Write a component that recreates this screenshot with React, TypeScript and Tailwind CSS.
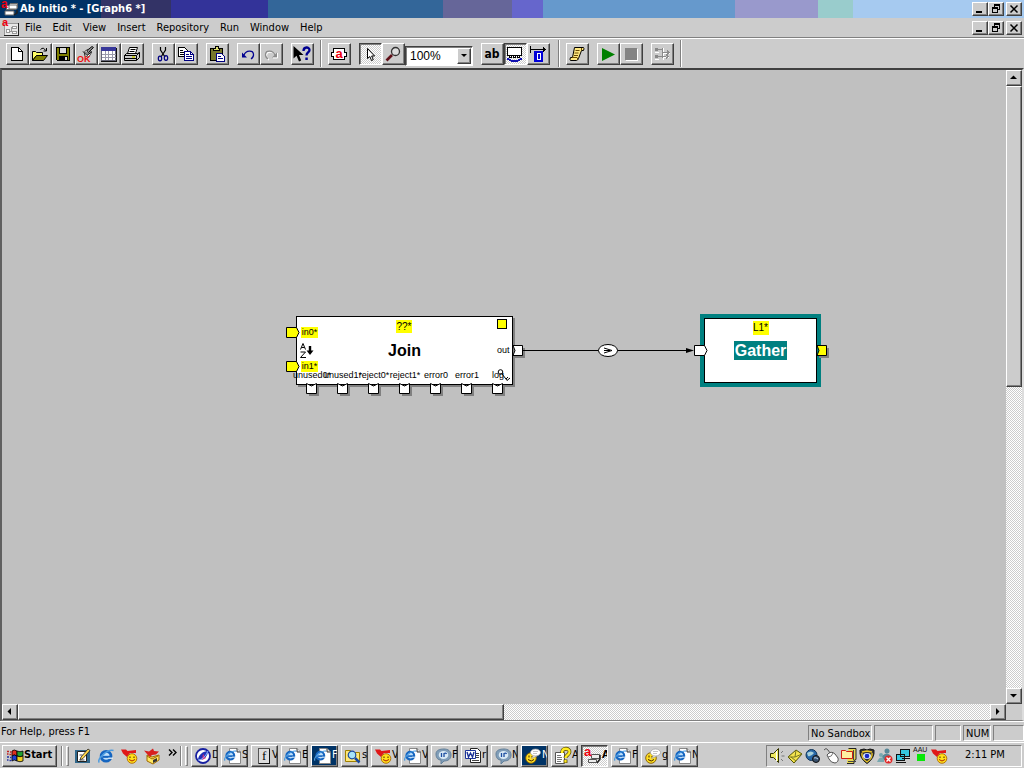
import React from "react";
import { clsx } from "clsx";

const edge =
  "border border-t-white border-l-white border-r-[#404040] border-b-[#404040] shadow-[inset_-1px_-1px_0_#808080]";
const raised = edge + " bg-[#cccccc]";
const pressed =
  "border border-t-[#404040] border-l-[#404040] border-r-white border-b-white shadow-[inset_1px_1px_0_#808080]";
const dither =
  "bg-[conic-gradient(#ffffff_25%,#cccccc_0_50%,#ffffff_0_75%,#cccccc_0)] bg-[length:2px_2px]";
const sunken = "border border-t-[#808080] border-l-[#808080] border-r-white border-b-white";

function Icon({ children, smooth = false }: { children: React.ReactNode; smooth?: boolean }) {
  return (
    <svg
      viewBox="0 0 16 16"
      className="h-4 w-4 shrink-0 overflow-visible"
      fill="none"
      shapeRendering={smooth ? "auto" : "crispEdges"}
      aria-hidden="true"
    >
      {children}
    </svg>
  );
}

/* ---------- shared glyphs ---------- */

const RedA = ({ x = 0, y = 8, size = 11 }: { x?: number; y?: number; size?: number }) => (
  <text x={x} y={y} fontSize={size} fontWeight="bold" fontFamily="Liberation Sans, sans-serif" fill="#ee0010">
    a
  </text>
);

const AppIcon = () => (
  <Icon smooth>
    <path d="M4.500 4.500h8v4h-8zM7.500 3.500l1-1h7v4l-2 2" fill="#fff" stroke="#666" />
    <path d="M7 4h8v4H7zM3 10h9v4H3z" fill="#fff" stroke="#666" />
    <path d="M12 14l3-2V9" stroke="#222" strokeWidth="1.500" />
    <RedA x={-1} y={7} size={12} />
  </Icon>
);

const DocIcon = () => (
  <Icon>
    <path d="M1 3h14v12H1z" fill="#e8e8e8" stroke="#999" />
    <path d="M15.500 3v12.500H1" stroke="#222" />
    <path d="M3.500 9.500h3v3h-3zM9.500 6.500h4v2h-4zM9.500 11.500h4v2h-4z" stroke="#999" fill="#fff" />
    <path d="M7 11h1.500M8.500 7v5" stroke="#999" />
    <RedA x={-1} y={6} />
  </Icon>
);

const IeGlyph = () => (
  <>
    <circle cx="7" cy="8.500" r="4.300" stroke="#1565c0" strokeWidth="2.400" fill="#bfe0fa" />
    <path d="M4 9h8" stroke="#1565c0" strokeWidth="1.800" />
    <path d="M9 10.200h4" stroke="#d8eaf8" strokeWidth="1.200" />
    <path d="M1 14C-1 11 8 2 13.500 3.500" stroke="#4a9be0" strokeWidth="1.300" />
  </>
);

const IePage = () => (
  <Icon smooth>
    <path d="M4.500 .5h7.500l3.500 3.500v11.500h-11z" fill="#fff" stroke="#888" />
    <path d="M12 .5V4h3.500" fill="#ddd" stroke="#333" />
    <g transform="translate(-1 0) scale(.9)">
      <IeGlyph />
    </g>
  </Icon>
);

const Smile = ({ cx = 10, cy = 10, r = 5 }: { cx?: number; cy?: number; r?: number }) => (
  <>
    <circle cx={cx} cy={cy} r={r} fill="#ffe01a" stroke="#b06a00" strokeWidth=".9" />
    <path d={`M${cx - 2} ${cy - 2}v1.500M${cx + 2} ${cy - 2}v1.500`} stroke="#402000" />
    <path d={`M${cx - 3} ${cy + 1}q3 3 6 0`} stroke="#b02000" />
  </>
);

const Messenger = () => (
  <Icon smooth>
    <path d="M0 1.500h5l1.500 1.500L15 2v3H9L6 9 2 5.500z" fill="#e01818" />
    <Smile cx={11} cy={10.5} r={4.8} />
  </Icon>
);

const ChatSmile = () => (
  <Icon smooth>
    <circle cx="6" cy="10" r="5.300" fill="#ffdf20" stroke="#805800" strokeWidth=".9" />
    <path d="M4 7.500v2M7 8v1.500M3 11.500q3.500 3 6 0" stroke="#402000" />
    <path d="M9 7l-2.500 3.500L12 8z" fill="#fff" stroke="#999" strokeWidth=".7" />
    <ellipse cx="10.500" cy="4.500" rx="5" ry="3.500" fill="#fff" stroke="#999" strokeWidth=".7" />
    <path d="M8 3.500h5M8 5.500h4" stroke="#aaa" strokeWidth=".7" />
  </Icon>
);

const IrcIcon = () => (
  <Icon smooth>
    <path d="M1 6C1 2 5 1 9 1s7 2 7 6-3 6-7 6l-3 3V12C3 12 1 10 1 6z" fill="#7f9db8" stroke="#64809a" />
    <ellipse cx="8.500" cy="7" rx="4.800" ry="4" fill="#d9eaf5" />
    <path d="M6.500 5v4M9 9V5.500q2-1 2.500.5" stroke="#1c4ea0" strokeWidth="1.300" />
  </Icon>
);

/* ---------- toolbar ---------- */

const NewIcon = () => (
  <Icon>
    <path d="M2.500 1.500h7l4 4v9h-11z" fill="#fff" stroke="#000" />
    <path d="M9.500 1.500v4h4" stroke="#000" />
  </Icon>
);
const OpenIcon = () => (
  <Icon smooth>
    <path d="M.5 5.500h3l1 1h6v3h-6l-4 5z" fill="#ffff66" stroke="#000" />
    <path d="M4.500 9.500h11l-4 5H.5z" fill="#808000" stroke="#000" />
    <path d="M8.500 3.500q3-3 5 1M14.500 2v3h-3" stroke="#000" />
  </Icon>
);
const SaveIcon = () => (
  <Icon>
    <path d="M1.500 1.500h13v13h-12l-1-1z" fill="#808000" stroke="#000" />
    <path d="M4.500 1.500h7v6h-7z" fill="#ddd" stroke="#000" />
    <path d="M4 10h9v5H4z" fill="#000" />
    <path d="M10 11h2v3h-2z" fill="#ddd" />
  </Icon>
);
const CheckIcon = () => (
  <Icon smooth>
    <path d="M6.500 5.500l3-2 4 3-3 5-4-2z" fill="#fff" stroke="#444" />
    <path d="M9 4.500l5-4 1.500 1-5 5zM5 5.500l4 4 5-4" fill="#888" stroke="#111" />
    <text x="-1" y="16" fontSize="9" fontWeight="bold" fontFamily="Liberation Sans, sans-serif" fill="#ee1010">
      OK
    </text>
  </Icon>
);
const TableIcon = () => (
  <Icon>
    <path d="M.5 1.500h14v13H.5z" fill="#fff" stroke="#667" />
    <path d="M0 1h15v4H0z" fill="#38389a" />
    <path d="M1 8.500h14M1 11.500h14M4.500 5v9M7.500 5v9M11.500 5v9" stroke="#99a" />
    <path d="M0 15.500h15.500V2" stroke="#111" />
  </Icon>
);
const PrintIcon = () => (
  <Icon smooth>
    <path d="M5.500 1.500h8l-2 6h-8z" fill="#fff" stroke="#000" />
    <path d="M6.500 3.500h5M5.500 5.500h5" stroke="#000" />
    <path d="M.5 9.500l2-2h11l2-1v5l-3 3H.5z" fill="#ccc" stroke="#000" />
    <path d="M.5 9.500h12v5M12.500 9.500l3-3M.5 12.500h12" stroke="#000" />
    <path d="M8 11h3" stroke="#c8c800" strokeWidth="1.500" />
  </Icon>
);
const CutIcon = () => (
  <Icon smooth>
    <path d="M5.500 1v3l4.500 7M10.500 1v3L6 11" stroke="#000" strokeWidth="1.200" />
    <ellipse cx="5" cy="12.500" rx="1.700" ry="2.300" stroke="#000080" strokeWidth="1.200" />
    <ellipse cx="11" cy="12" rx="1.700" ry="2.300" stroke="#000080" strokeWidth="1.200" />
  </Icon>
);
const CopyIcon = () => (
  <Icon>
    <path d="M.5 1.500h6l3 3v6h-9z" fill="#fff" stroke="#000" />
    <path d="M2 4.500h3M2 6.500h5M2 8.500h5" stroke="#000" />
    <path d="M6.500 5.500h6l3 3v6h-9z" fill="#fff" stroke="#000080" />
    <path d="M12.500 5.500v3h3M8 8.500h3M8 10.500h6M8 12.500h6" stroke="#000080" />
  </Icon>
);
const PasteIcon = () => (
  <Icon>
    <path d="M1.500 2.500h12v12h-12z" fill="#77772b" stroke="#000" />
    <path d="M4.500 4.500h6v-2h-1.500v-2h-3v2H4.500z" fill="#dddd70" stroke="#000" />
    <path d="M7.500 7.500h5l3 3v5h-8z" fill="#fff" stroke="#000080" />
    <path d="M9 10.500h3M9 12.500h5" stroke="#000080" />
  </Icon>
);
const UndoIcon = () => (
  <Icon smooth>
    <path d="M4 9C6 4 13 4 13.500 8c.5 3-1 4-2.500 5" stroke="#000090" strokeWidth="1.200" />
    <path d="M2 6.500v5h5z" fill="#000090" />
  </Icon>
);
const RedoIcon = () => (
  <Icon smooth>
    <path d="M13 10C11 5 4 5 3.500 9c-.5 3 1 4 2.500 5" stroke="#fff" strokeWidth="1.200" />
    <path d="M12 9C10 4 3 4 2.500 8c-.5 3 1 4 2.500 5" stroke="#8b8b8b" strokeWidth="1.200" />
    <path d="M14 6.500v5H9z" fill="#8b8b8b" />
    <path d="M14.500 7v5H10" stroke="#fff" />
  </Icon>
);
const HelpIcon = () => (
  <Icon smooth>
    <path d="M-.5 0v12.500l3-2.700L5 15.500l2.200-1L5 9h4.500z" fill="#000" />
    <path d="M9.500 5c0-4.500 6-4.500 6-1 0 2.500-3 2.500-3 5.500" stroke="#000090" strokeWidth="2.300" />
    <path d="M11.300 11.500h2.500v2.500h-2.500z" fill="#000090" />
  </Icon>
);
const ComponentIcon = () => (
  <Icon>
    <path d="M0 8.500h16" stroke="#000" strokeWidth="5" />
    <path d="M2.500 2.500h11v11h-11z" fill="#fff" stroke="#000" />
    <path d="M1 7h2v3H1zM13 7h2v3h-2z" fill="#fff" />
    <RedA x={4.5} y={12} size={13} />
  </Icon>
);
const PointerIcon = () => (
  <Icon smooth>
    <path d="M5.500 2.500v10l2.300-2 1.700 4 1.800-.8-1.700-3.700h3z" fill="#fff" stroke="#000" />
  </Icon>
);
const ZoomIcon = () => (
  <Icon smooth>
    <circle cx="10.500" cy="5.500" r="4" fill="#ddd" stroke="#333" strokeWidth="1.300" />
    <path d="M7 9l-5.500 5.500" stroke="#601018" strokeWidth="2.600" />
  </Icon>
);
const LayoutIcon = () => (
  <Icon>
    <path d="M.5 1.500h14v8H.5z" fill="#fff" stroke="#000" />
    <path d="M2.500 9.500h2v2h-2zM6.500 9.500h2v2h-2zM10.500 9.500h2v2h-2z" fill="#fff" stroke="#000" />
    <path d="M0 12h2v1h2v1h7v-1h2v-1h2v2h-2v1h-2v1H4v-1H2v-1H0z" fill="#1010b0" />
  </Icon>
);
const DepthIcon = () => (
  <Icon>
    <path d="M.5 0v7M0 3.500h15M13 1.500l2 2-2 2" stroke="#000" />
    <path d="M4 5h9v11H4z" fill="#0000d8" />
    <path d="M7.500 7.500h3v6h-3z" stroke="#fff" />
  </Icon>
);
const ScrollIcon = () => (
  <Icon smooth>
    <path d="M5.500 1.500h9q1 1 0 3h-2l-3 8q-1 2-2 2h-6q-1-1 0-3h2z" fill="#ffe880" stroke="#000" />
    <path d="M6.500 4.500h4M5.500 7h4M5 9.500h4M12.500 2v2.500M3 11.500h5l1 2" stroke="#6b4a00" />
  </Icon>
);
const PlayIcon = () => (
  <Icon smooth>
    <path d="M2 2l13 6.500L2 15z" fill="#008000" />
  </Icon>
);
const StopIcon = () => (
  <Icon>
    <path d="M3 3h12v12H3z" fill="#fff" />
    <path d="M2 2h12v12H2z" fill="#848484" />
  </Icon>
);
const FlowIcon = () => (
  <Icon>
    <path d="M1 6.500h4M1 13.500h4M9.500 2v12M10 7.500h6M10 11.500h5" stroke="#fff" />
    <path d="M1 2h3v3H1zM1 9h3v3H1z" fill="#888" />
    <path d="M4 3.500h4M4 10.500h4M8.500 2v10M9 6.500h6M9 10.500h3M13 4.500l2 2-2 2M12 8.500l2 2-2 2" stroke="#8b8b8b" />
  </Icon>
);

function ToolButton({
  label,
  down,
  disabled,
  children,
}: {
  label: string;
  down?: boolean;
  disabled?: boolean;
  children: React.ReactNode;
}) {
  return (
    <button
      type="button"
      aria-label={label}
      aria-pressed={down}
      disabled={disabled}
      className={clsx(
        "flex h-[22px] w-[23px] shrink-0 items-center pl-0.5",
        down ? pressed : raised,
        down && dither,
      )}
    >
      {children}
    </button>
  );
}

const ToolSeparator = () => <div className="h-[27px] w-0.5 shrink-0 border-l border-[#808080] bg-white" />;

function Toolbar() {
  return (
    <div role="toolbar" aria-label="Standard" className="flex h-[30px] items-center gap-2 border-t border-white pl-1.5">
      <div className="flex">
        <ToolButton label="New"><NewIcon /></ToolButton>
        <ToolButton label="Open"><OpenIcon /></ToolButton>
        <ToolButton label="Save"><SaveIcon /></ToolButton>
        <ToolButton label="Check"><CheckIcon /></ToolButton>
        <ToolButton label="Table"><TableIcon /></ToolButton>
        <ToolButton label="Print"><PrintIcon /></ToolButton>
      </div>
      <div className="flex">
        <ToolButton label="Cut"><CutIcon /></ToolButton>
        <ToolButton label="Copy"><CopyIcon /></ToolButton>
      </div>
      <ToolButton label="Paste"><PasteIcon /></ToolButton>
      <div className="flex">
        <ToolButton label="Undo"><UndoIcon /></ToolButton>
        <ToolButton label="Redo" disabled><RedoIcon /></ToolButton>
      </div>
      <div className="flex items-center gap-1.5">
        <ToolButton label="Context help"><HelpIcon /></ToolButton>
        <ToolSeparator />
        <ToolButton label="Component"><ComponentIcon /></ToolButton>
      </div>
      <div className="flex items-center">
        <ToolButton label="Select" down><PointerIcon /></ToolButton>
        <ToolButton label="Zoom"><ZoomIcon /></ToolButton>
        <div className={clsx("relative mt-1 flex h-5 w-[68px] bg-white", pressed)}>
          <select
            aria-label="Zoom level"
            className="w-full appearance-none bg-transparent pl-1 text-[12px] leading-[18px] font-['Liberation_Sans',sans-serif] text-black"
          >
            <option>100%</option>
          </select>
          <span
            className={clsx("pointer-events-none absolute top-px right-px flex h-4 w-3.5 items-center justify-center", raised)}
          >
            <span className="border-x-3 border-t-3 border-x-transparent border-t-black" />
          </span>
        </div>
      </div>
      <div className="flex">
        <ToolButton label="Labels">
          <span className="w-4 text-center font-['DejaVu_Sans_Condensed','DejaVu_Sans',sans-serif] text-[12px] font-bold">
            ab
          </span>
        </ToolButton>
        <ToolButton label="Ports" down><LayoutIcon /></ToolButton>
        <ToolButton label="Depth"><DepthIcon /></ToolButton>
      </div>
      <div className="flex items-center gap-1.5">
        <ToolSeparator />
        <ToolButton label="Script"><ScrollIcon /></ToolButton>
      </div>
      <div className="flex">
        <ToolButton label="Run"><PlayIcon /></ToolButton>
        <ToolButton label="Stop" disabled><StopIcon /></ToolButton>
      </div>
      <div className="flex items-center gap-1.5">
        <ToolButton label="Flow" disabled><FlowIcon /></ToolButton>
        <ToolSeparator />
      </div>
    </div>
  );
}

/* ---------- title and menu ---------- */

function WindowButtons() {
  const base = clsx("flex h-3.5 w-4 items-center justify-center", raised);
  return (
    <div className="flex gap-0.5 pr-0.5">
      <div className="flex">
        <button type="button" aria-label="Minimize" className={base}>
          <svg viewBox="0 0 10 10" className="h-2.5 w-2.5" shapeRendering="crispEdges">
            <path d="M1 7h6v2H1z" />
          </svg>
        </button>
        <button type="button" aria-label="Restore" className={base}>
          <svg viewBox="0 0 10 10" className="h-2.5 w-2.5" shapeRendering="crispEdges" fill="none" stroke="#000">
            <path d="M3.500 3V.5h5v5H7M3 1.500h6M1.500 3.500h5v5h-5zM1 4.500h6" />
          </svg>
        </button>
      </div>
      <button type="button" aria-label="Close" className={base}>
        <svg viewBox="0 0 10 10" className="h-2.5 w-2.5" fill="none" stroke="#000" strokeWidth="1.500">
          <path d="M1.500 1.500l7 7M8.500 1.500l-7 7" />
        </svg>
      </button>
    </div>
  );
}

function TitleBar() {
  return (
    <header className="flex h-[18px] items-center justify-between bg-[linear-gradient(to_right,#003366_0_9.9%,#333366_0_16.7%,#333399_0_26.2%,#336699_0_43.3%,#666699_0_50%,#6666cc_0_53%,#6699cc_0_71.8%,#9999cc_0_79.9%,#99cccc_0_83.3%,#a6caf0_0)] pl-0.5">
      <h1 className="flex items-center gap-0.5 text-[11px] font-bold whitespace-nowrap text-white">
        <AppIcon />
        Ab Initio * - [Graph6 *]
      </h1>
      <WindowButtons />
    </header>
  );
}

const menus = ["File", "Edit", "View", "Insert", "Repository", "Run", "Window", "Help"];

function MenuBar() {
  return (
    <div className="flex h-5 items-center justify-between border-b border-[#808080] pt-px pl-[3px]">
      <nav aria-label="Menu" className="flex items-center">
        <DocIcon />
        {menus.map((m) => (
          <button key={m} type="button" className="pr-[5px] pl-1.5 text-[11px] leading-4">
            {m}
          </button>
        ))}
      </nav>
      <WindowButtons />
    </div>
  );
}

/* ---------- diagram ---------- */

const tag = "absolute bg-[#ffff00] text-center";

function SidePort({ className, fill }: { className: string; fill: string }) {
  return (
    <svg viewBox="0 0 14 12" className={clsx("absolute h-3 w-3.5", className)} aria-hidden="true">
      <path d="M.5.500h10l2.500 5-2.500 5h-10z" fill={fill} stroke="#000" />
    </svg>
  );
}

function OutPort({ className, fill }: { className: string; fill: string }) {
  return (
    <svg viewBox="0 0 13 14" className={clsx("absolute h-3.5 w-[13px]", className)} aria-hidden="true">
      <path d="M2 3h10v10H2z" fill="#808080" />
      <path d="M0 .5h9.500v10H0l2-5z" fill={fill} stroke="#000" />
    </svg>
  );
}

const bottomPorts = [
  { name: "unused0*", box: "left-[-8px]" },
  { name: "unused1*", box: "left-[23px]" },
  { name: "reject0*", box: "left-[54px]" },
  { name: "reject1*", box: "left-[85px]" },
  { name: "error0", box: "left-[116px]" },
  { name: "error1", box: "left-[147px]" },
  { name: "log", box: "left-[178px]" },
];

function JoinNode() {
  return (
    <section
      aria-label="Join"
      className="absolute top-[246px] left-[294px] h-[69px] w-[217px] border border-black bg-white text-[9px] leading-[11px] shadow-[2px_2px_0_#808080]"
    >
      <SidePort className="top-[10px] left-[-11px]" fill="#ffff00" />
      <span className={clsx(tag, "top-[10px] left-1 w-[17px]")}>in0*</span>
      <svg viewBox="0 0 14 16" className="absolute top-[26px] left-[3px] h-4 w-3.5" fill="none" stroke="#000" aria-hidden="true">
        <path d="M.5 6.500l2.500-6 2.500 6M1.500 4.500h3M.5 9h5l-5 5.500h5.500" />
        <path d="M10 3v5" strokeWidth="2.400" />
        <path d="M6.500 7.500h7L10 12z" fill="#000" stroke="none" />
      </svg>
      <SidePort className="top-[44px] left-[-11px]" fill="#ffff00" />
      <span className={clsx(tag, "top-[44px] left-1 w-[17px]")}>in1*</span>
      <span className={clsx(tag, "top-[3px] left-[99px] w-4 text-[10px] leading-[13px]")}>??*</span>
      <span className="absolute top-[2px] left-[200px] h-2.5 w-2.5 border border-black bg-[#ffff00]" />
      <h2 className="pt-[25px] text-center text-[16px] leading-[18px] font-bold">Join</h2>
      <span className="absolute top-[28px] left-[200px]">out</span>
      <OutPort className="top-[28px] left-[216px]" fill="#fff" />
      {bottomPorts.map((p) => (
        <div key={p.name} className={clsx("absolute top-[53px] flex w-[46px] flex-col items-center", p.box)}>
          <span>{p.name}</span>
          <svg viewBox="0 0 14 15" className="mt-px ml-0.5 h-[15px] w-3.5 shrink-0" aria-hidden="true">
            <path d="M3 5h10v9H3z" fill="#808080" />
            <path d="M.5 1.500l5 2.500 5-2.500v10H.5z" fill="#fff" stroke="#000" />
          </svg>
        </div>
      ))}
      <svg viewBox="0 0 14 14" className="absolute top-[52px] left-[200px] h-3.5 w-3.5" fill="none" stroke="#000" aria-hidden="true">
        <circle cx="3.500" cy="3" r="2.300" />
        <path d="M5 5l4 5 2-2M9 10l1 1.500 3-2.500" />
      </svg>
    </section>
  );
}

function GatherNode() {
  return (
    <section
      aria-label="Gather"
      className="absolute top-[244px] left-[698px] h-[73px] w-[121px] border-4 border-[#008080] bg-white text-[10px] leading-[14px]"
    >
      <div className="flex h-full flex-col items-center border border-black pt-0.5">
        <span className="w-4 bg-[#ffff00] text-center">L1*</span>
        <h2 className="mt-1.5 bg-[#008080] px-px text-[16px] leading-[19px] font-bold text-white">Gather</h2>
      </div>
      <SidePort className="top-[27px] left-[-10px]" fill="#fff" />
      <OutPort className="top-[27px] left-[113px]" fill="#ffff00" />
    </section>
  );
}

function Diagram() {
  return (
    <main className="relative min-h-0 min-w-0 flex-1 overflow-hidden bg-[#c0c0c0] font-['Liberation_Sans',Arial,sans-serif]">
      <JoinNode />
      <GatherNode />
      <svg viewBox="0 0 176 14" className="absolute top-[274px] left-[520px] h-3.5 w-44" aria-hidden="true">
        <path d="M0 6.500h170" stroke="#000" />
        <path d="M164 4l8 2.500-8 2.500z" />
        <ellipse cx="86" cy="6.500" rx="9.500" ry="6" fill="#fff" stroke="#000" />
        <path d="M82 4l8 2.500-8 2.500M82 6.500h6" fill="none" stroke="#000" />
      </svg>
    </main>
  );
}

const arrows: Record<string, string> = {
  up: "M4 9h7L7.500 5.500z",
  down: "M4 6h7l-3.500 3.500z",
  left: "M9 4v7L5.500 7.500z",
  right: "M6 4v7l3.500-3.500z",
};

function ScrollArrow({ dir }: { dir: string }) {
  return (
    <button
      type="button"
      aria-label={"Scroll " + dir}
      className={clsx("flex h-4 w-4 shrink-0 items-center justify-center", raised)}
    >
      <svg viewBox="0 0 16 16" className="h-4 w-4 shrink-0">
        <path d={arrows[dir]} />
      </svg>
    </button>
  );
}

function Workspace() {
  return (
    <div className="flex min-h-0 flex-1 border-2 border-t-[#404040] border-r-[#dddddd] border-b border-b-[#808080] border-l-[#606060]">
      <div className="flex min-w-0 flex-1 flex-col">
        <Diagram />
        <div className={clsx("flex h-4", dither)}>
          <ScrollArrow dir="left" />
          <div className="flex-1">
            <div className={clsx("h-4 w-1/2", raised)} />
          </div>
          <ScrollArrow dir="right" />
        </div>
      </div>
      <div className={clsx("flex w-4 flex-col", dither)}>
        <ScrollArrow dir="up" />
        <div className="flex-1">
          <div className={clsx("h-1/2 w-4", raised)} />
        </div>
        <ScrollArrow dir="down" />
        <div className="h-4 bg-[#cccccc]" />
      </div>
    </div>
  );
}

function StatusBar() {
  const cell = clsx("h-4 pl-0.5 leading-[15px]", sunken);
  return (
    <div className="flex h-[21px] items-center justify-between border-t border-white pt-px pl-px text-[11px]">
      <p>For Help, press F1</p>
      <div className="flex gap-0.5 whitespace-nowrap">
        <span className={clsx(cell, "w-16")}>No Sandbox</span>
        <span className={clsx(cell, "w-[59px]")} />
        <span className={clsx(cell, "w-[26px]")} />
        <span className={clsx(cell, "w-7")}>NUM</span>
        <span className={clsx(cell, "w-[31px]")} />
      </div>
    </div>
  );
}

/* ---------- taskbar ---------- */

const WindowsFlag = () => (
  <Icon smooth>
    <path d="M5 3q2-2 5 0v5q-3-2-5 0z" fill="#e03020" stroke="#000" strokeWidth=".8" />
    <path d="M10 3q3 1.500 6 0v5q-3 1.500-6 0z" fill="#20a030" stroke="#000" strokeWidth=".8" />
    <path d="M5 8q2-2 5 0v5q-3-2-5 0z" fill="#2040d0" stroke="#000" strokeWidth=".8" />
    <path d="M10 8q3 1.500 6 0v5q-3 1.500-6 0z" fill="#f0d020" stroke="#000" strokeWidth=".8" />
    <path d="M0 3.500h2M3 4h1.500M0 6h1.500M2.500 6.500h2" stroke="#c02020" strokeWidth="1.500" />
    <path d="M0 9h2M3 9.500h1.500M0 12h1.500M2.500 12.500h2" stroke="#2030a0" strokeWidth="1.500" />
  </Icon>
);
const DesktopIcon = () => (
  <Icon smooth>
    <path d="M0 2h15v13H0z" fill="#30688c" />
    <path d="M2.500 3.500h9v10h-9z" fill="#fff" stroke="#222" />
    <path d="M5 12l1-3 7-8 2 1.500-7 8z" fill="#ffd848" stroke="#222" strokeWidth=".8" />
    <path d="M4.500 7h3M4.500 12h5" stroke="#555" />
  </Icon>
);
const IeIcon = () => (
  <Icon smooth>
    <g transform="translate(0 -1.500) scale(1.150)">
      <IeGlyph />
    </g>
  </Icon>
);
const OutlookIcon = () => (
  <Icon smooth>
    <path d="M3 7l5 2 7-2v5l-6 4-6-3z" fill="#ffe860" stroke="#a06800" />
    <path d="M0 2.500l5 1 4-3 1 2.500 5 .5-3 3-4 .500L6 9 3 6z" fill="#d82020" />
    <path d="M3 8l5 3 6-3" stroke="#a06800" />
    <path d="M9 12l4-2v3l-4 2z" fill="#333" />
  </Icon>
);
const GlobeSwoosh = () => (
  <Icon smooth>
    <circle cx="8" cy="8" r="7" fill="#fff" stroke="#1820a0" strokeWidth="1.800" />
    <path d="M3 12C3 7 8 3 13 3c0 5-4 9-10 9z" fill="#2030b8" />
    <path d="M7 12l1-6 3 4z" fill="#d03080" />
    <path d="M3 12q6 0 10-9" stroke="#80b0ff" />
  </Icon>
);
const FIcon = () => (
  <Icon>
    <path d="M3.500.5h11v15h-11z" fill="#ddd" stroke="#555" />
    <path d="M14.500 1v14.500H4" stroke="#111" />
    <text x="7" y="12" fontSize="13" fontFamily="Liberation Serif, serif" fill="#000">
      f
    </text>
  </Icon>
);
const SearchFolder = () => (
  <Icon smooth>
    <path d="M.5 2.500h5l1 2h8v9H.5z" fill="#ffe878" stroke="#a08000" />
    <circle cx="7" cy="7" r="3.800" fill="#a8e4f8" stroke="#1848a0" strokeWidth="1.200" />
    <path d="M10 10l4.500 4.500" stroke="#1848a0" strokeWidth="2.500" />
  </Icon>
);
const WordIcon = () => (
  <Icon smooth>
    <path d="M5.500 .5h7l3 3v11h-10z" fill="#fff" stroke="#222" />
    <path d="M11 5.500h3M11 7.500h3M11 9.500h3M7 12.500h7" stroke="#444" />
    <path d="M.5 2.500h10v8H.5z" fill="#fff" stroke="#1c3498" />
    <path d="M2 4l1.500 5L5.500 5l2 4L9 4" stroke="#1c3498" strokeWidth="1.400" />
  </Icon>
);
const HelpPage = () => (
  <Icon smooth>
    <path d="M.5 4.500h9v11h-9z" fill="#fff" stroke="#555" />
    <path d="M2 7.500h4M2 9.500h5M2 11.500h5M2 13.500h4" stroke="#777" />
    <path d="M7 5c0-6 8-5 7.500-1 0 3-4 3-4 6" stroke="#554400" strokeWidth="3.800" />
    <path d="M10.500 11.500v3.500" stroke="#554400" strokeWidth="3.800" />
    <path d="M7 5c0-6 8-5 7.500-1 0 3-4 3-4 6M10.500 12v2.500" stroke="#ffec20" strokeWidth="2.300" />
  </Icon>
);
const AbTask = () => (
  <Icon smooth>
    <path d="M6.500 6.500h8v4h-8zM3.500 11.500h8v3h-8z" fill="#eee" stroke="#555" />
    <path d="M12 15l3-4V7" stroke="#222" strokeWidth="1.500" />
    <RedA x={-1} y={8} size={13} />
  </Icon>
);

const tasks: { icon: React.ReactNode; text: string; flash?: boolean; active?: boolean }[] = [
  { icon: <GlobeSwoosh />, text: "D" },
  { icon: <IePage />, text: "S" },
  { icon: <FIcon />, text: "V" },
  { icon: <IePage />, text: "E" },
  { icon: <IePage />, text: "F", flash: true },
  { icon: <SearchFolder />, text: "s" },
  { icon: <Messenger />, text: "V" },
  { icon: <IePage />, text: "V" },
  { icon: <IrcIcon />, text: "F" },
  { icon: <WordIcon />, text: "r" },
  { icon: <IrcIcon />, text: "N" },
  { icon: <ChatSmile />, text: "N", flash: true },
  { icon: <HelpPage />, text: "A" },
  { icon: <AbTask />, text: "A", active: true },
  { icon: <IePage />, text: "F" },
  { icon: <ChatSmile />, text: "g" },
  { icon: <IePage />, text: "N" },
];

const trayIcons: React.ReactNode[] = [
  <Icon smooth>
    <path d="M1.500 5.500h3l5-5v14l-5-5h-3z" fill="#f0ec60" stroke="#333300" />
    <path d="M7.500 3v10" stroke="#fff" />
    <path d="M12 5l2-2M12.500 8h3M12 11l2 2" stroke="#777" />
  </Icon>,
  <Icon smooth>
    <path d="M1 9l8-7 6 4-8 9z" fill="#f5e44c" stroke="#555500" />
    <path d="M9 2l-1 7-7 0M8 9l7-3M4 9l5 4" stroke="#777722" />
  </Icon>,
  <Icon smooth>
    <circle cx="6.500" cy="7" r="5.500" fill="#2868a8" stroke="#103458" />
    <path d="M2 5q4-3 7 0-3 4-6 3" fill="#a8d0d8" />
    <circle cx="11" cy="11" r="3.500" fill="#38506c" stroke="#111" />
    <path d="M9 10q2-1 4 1" stroke="#b8d8f8" />
  </Icon>,
  <Icon smooth>
    <path d="M1 2q2-3 4 0l2 3" stroke="#555" />
    <path d="M4 7q4-5 8-1l3 4q1 4-3 5-4 0-6-4z" fill="#fff" stroke="#555" />
    <path d="M5 9q4 0 5-4" stroke="#777" />
  </Icon>,
  <Icon smooth>
    <path d="M7.500 .5h7.500v11l-2 1v3H6" fill="#e8d850" stroke="#222" />
    <path d="M.5 2.500h4l1 1h6v7H.5z" fill="#fff0a0" stroke="#d02010" />
    <path d="M12.500 2v10M7 13.500h8" stroke="#444" />
  </Icon>,
  <Icon smooth>
    <path d="M1 2l4-1 3 1 3-1 4 1q1 8-7 13.500Q0 10 1 2z" fill="#333" stroke="#111" />
    <path d="M3 4l5-1 5 1M3 5q-1 5 5 9 6-4 5-9" stroke="#e8c428" strokeWidth="1.400" />
    <ellipse cx="8" cy="8" rx="4" ry="3" fill="#d8e8ff" />
    <circle cx="8" cy="8" r="2.300" fill="#1828c8" />
  </Icon>,
  <Icon smooth>
    <circle cx="10" cy="3" r="2.500" fill="#588898" />
    <path d="M5 8q5-5 9 0v4H6z" fill="#588898" />
    <circle cx="4" cy="7" r="2" fill="#78a8b0" />
    <path d="M0 14q3-7 7-3v3z" fill="#78a8b0" />
    <circle cx="11.500" cy="11.500" r="4" fill="#e02828" />
    <path d="M9.500 9.500l4 4M13.500 9.500l-4 4" stroke="#fff" strokeWidth="1.400" />
  </Icon>,
  <Icon>
    <path d="M5.500 1.500h9v7h-9zM1.500 6.500h8v6h-8z" fill="#35c8e0" stroke="#111" />
    <path d="M1 14h10v1H1zM7 10h8v1H7z" fill="#111" />
  </Icon>,
  <Icon>
    <text x="0" y="4" fontSize="7" fontFamily="Liberation Sans, sans-serif" fill="#111">
      AAU
    </text>
    <path d="M4 6h8v7H4z" fill="#08e808" />
  </Icon>,
  <Messenger />,
];

const BandGrip = () => (
  <div className="flex h-5 gap-[3px]">
    <span className="w-0.5 border-l border-[#808080] bg-white" />
    <span className="w-[3px] border border-t-white border-r-[#808080] border-b-[#808080] border-l-white" />
  </div>
);

function Taskbar() {
  return (
    <footer className="flex h-[26px] items-center border-t border-white pl-0.5 text-[11px]">
      <button type="button" className={clsx("flex h-[22px] w-[55px] items-center gap-px pl-1 font-bold", raised)}>
        <WindowsFlag />
        Start
      </button>
      <div className="flex items-center pl-1">
        <BandGrip />
        <div className="flex items-center gap-[7px] pl-1.5">
          <button type="button" aria-label="Show Desktop"><DesktopIcon /></button>
          <button type="button" aria-label="Internet Explorer"><IeIcon /></button>
          <button type="button" aria-label="Messenger"><Messenger /></button>
          <button type="button" aria-label="Outlook"><OutlookIcon /></button>
        </div>
        <button type="button" aria-label="More" className="mb-1.5 w-5 pl-2">
          <svg viewBox="0 0 9 7" className="h-[7px] w-[9px]" fill="none" stroke="#000" strokeWidth="1.400">
            <path d="M1 .5l3 3-3 3M5 .5l3 3-3 3" />
          </svg>
        </button>
        <BandGrip />
      </div>
      <div className="flex flex-1 gap-[3px] pl-[3px]">
        {tasks.map((t, i) => (
          <button
            key={i}
            type="button"
            className={clsx(
              "flex h-[22px] w-[27px] shrink-0 items-center gap-px overflow-hidden pl-[3px]",
              t.active && [pressed, dither, "font-bold"],
              t.flash && [edge, "bg-[#003366] text-white"],
              !t.active && !t.flash && raised,
            )}
          >
            {t.icon}
            <span>{t.text}</span>
          </button>
        ))}
      </div>
      <div className={clsx("mr-0.5 flex h-[22px] w-64 items-center gap-0.5 pl-0.5", sunken)}>
        {trayIcons.map((icon, i) => (
          <React.Fragment key={i}>{icon}</React.Fragment>
        ))}
        <time className="pl-4 whitespace-nowrap">2:11 PM</time>
      </div>
    </footer>
  );
}

export default function App() {
  return (
    <div className="flex h-screen flex-col overflow-hidden bg-[#cccccc] font-['DejaVu_Sans_Condensed','DejaVu_Sans',Tahoma,sans-serif] text-black">
      <TitleBar />
      <MenuBar />
      <Toolbar />
      <Workspace />
      <StatusBar />
      <Taskbar />
    </div>
  );
}
